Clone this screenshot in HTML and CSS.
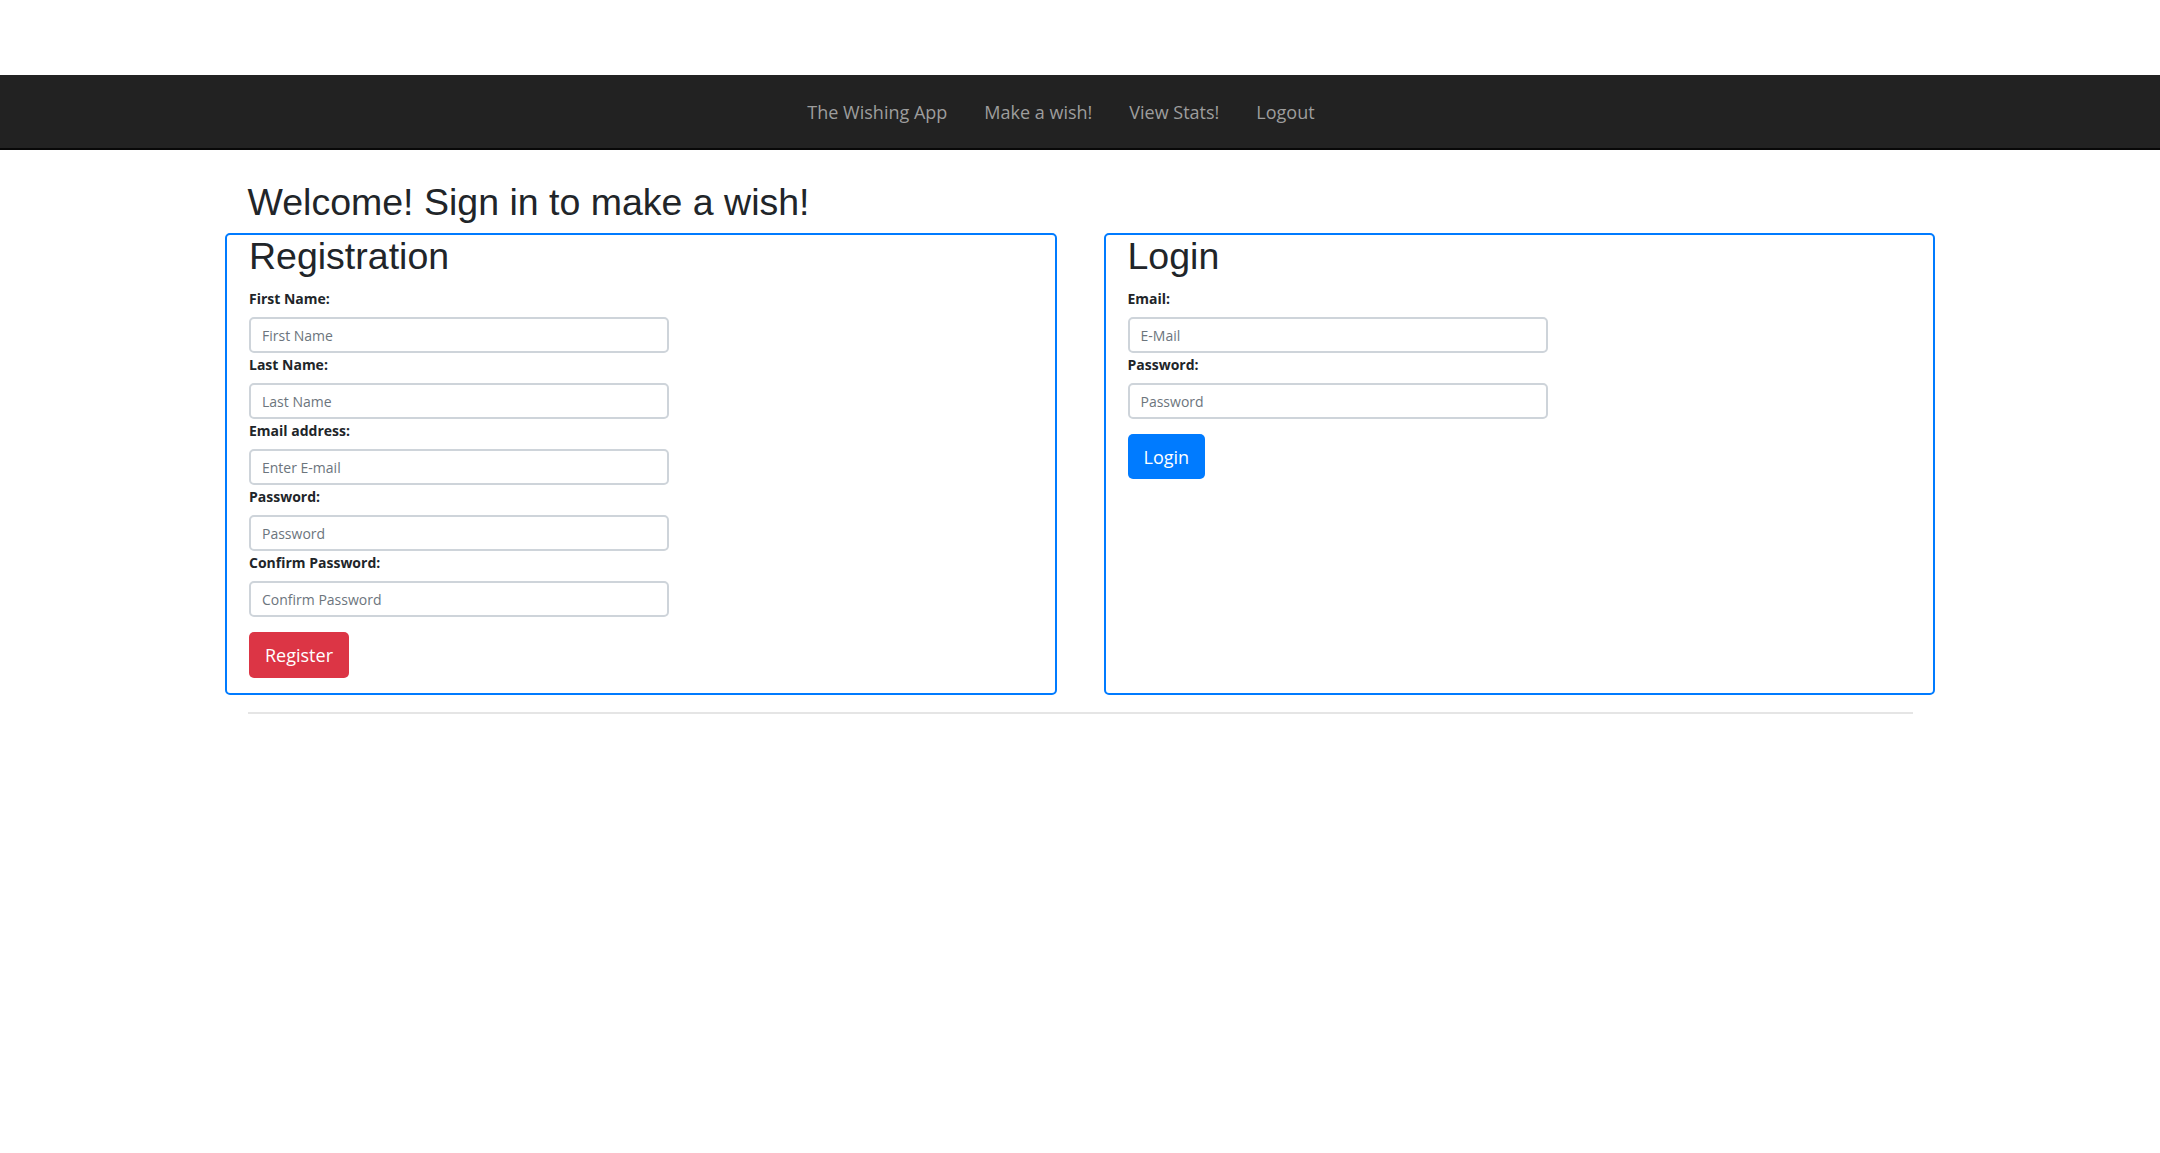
FILE: index.html
```html
<!DOCTYPE html>
<html lang="en">
<head>
    <meta charset="UTF-8">
    <meta name="viewport" content="width=device-width, initial-scale=1.0">
    <title>The Wishing App</title>
    <link rel="stylesheet" href="styles.css">
</head>
<body>
    <nav class="navbar">
        <ul class="nav-links">
            <li><a href="#">The Wishing App</a></li>
            <li><a href="#">Make a wish!</a></li>
            <li><a href="#">View Stats!</a></li>
            <li><a href="#">Logout</a></li>
        </ul>
    </nav>

    <main class="container">
        <h1 class="welcome">Welcome! Sign in to make a wish!</h1>
        <div class="panels">
            <!-- Registration form -->
            <section class="panel">
                <h2 class="panel-title">Registration</h2>
                <form class="form">
                    <label for="first-name">First Name:</label>
                    <input type="text" id="first-name" placeholder="First Name">
                    <label for="last-name">Last Name:</label>
                    <input type="text" id="last-name" placeholder="Last Name">
                    <label for="reg-email">Email address:</label>
                    <input type="email" id="reg-email" placeholder="Enter E-mail">
                    <label for="reg-password">Password:</label>
                    <input type="password" id="reg-password" placeholder="Password">
                    <label for="confirm-password">Confirm Password:</label>
                    <input type="password" id="confirm-password" placeholder="Confirm Password">
                    <button type="button" class="btn btn-danger">Register</button>
                </form>
            </section>

            <!-- Login form -->
            <section class="panel">
                <h2 class="panel-title">Login</h2>
                <form class="form">
                    <label for="login-email">Email:</label>
                    <input type="email" id="login-email" placeholder="E-Mail">
                    <label for="login-password">Password:</label>
                    <input type="password" id="login-password" placeholder="Password">
                    <button type="button" class="btn btn-primary">Login</button>
                </form>
            </section>
        </div>
        <hr class="divider">
    </main>
</body>
</html>
```

FILE: styles.css
```css
body {
    margin: 0;
    font-family: 'Open Sans', 'Noto Sans', sans-serif;
    color: #212529;
    background-color: #ffffff;
}
.navbar {
    margin-top: 75px;
    height: 73px;
    background-color: #222222;
    border-bottom: 2px solid #080808;
}
.nav-links {
    list-style: none;
    margin: 0;
    padding: 0 38px 0 0;
    display: flex;
    justify-content: center;
}
.nav-links a {
    display: block;
    padding: 2px 18.5px 0;
    line-height: 71px;
    font-size: 18px;
    color: #9d9d9d;
    text-decoration: none;
}
.container {
    width: 1710px;
    margin: 0 auto;
}
.welcome {
    margin: 29.5px 0 8.5px;
    padding: 0 22.5px;
    font-family: 'Liberation Sans', Arial, sans-serif;
    font-size: 37.5px;
    font-weight: normal;
    line-height: 45px;
}
.panels {
    display: grid;
    grid-template-columns: 1fr 1fr;
    gap: 47px;
}
.panel {
    border: 2px solid #007bff;
    border-radius: 5px;
    padding: 0 22px 15px;
}
.panel-title {
    margin: 0 0 12px;
    font-family: 'Liberation Sans', Arial, sans-serif;
    font-size: 37.5px;
    font-weight: normal;
    line-height: 42px;
}
.form {
    display: flex;
    flex-direction: column;
    align-items: flex-start;
}
.form label {
    font-size: 14px;
    font-weight: bold;
    line-height: 20px;
    margin-bottom: 8px;
}
.form input {
    box-sizing: border-box;
    width: 420px;
    height: 36px;
    margin: 0 0 2px;
    padding: 0 11px;
    border: 2px solid #ced4da;
    border-radius: 5px;
    font-family: 'Open Sans', 'Noto Sans', sans-serif;
    font-size: 14px;
    color: #495057;
}
.form input::placeholder {
    color: #6c757d;
}
.btn {
    margin-top: 13px;
    height: 46px;
    padding: 0 16px;
    border: none;
    border-radius: 5px;
    font-family: 'Open Sans', 'Noto Sans', sans-serif;
    font-size: 18px;
    color: #ffffff;
    cursor: pointer;
}
.btn-danger {
    background-color: #dc3545;
}
.btn-primary {
    background-color: #007bff;
    height: 45px;
}
.divider {
    margin: 17px 22.5px 0;
    border: none;
    border-top: 2px solid rgba(0, 0, 0, 0.1);
}
```
